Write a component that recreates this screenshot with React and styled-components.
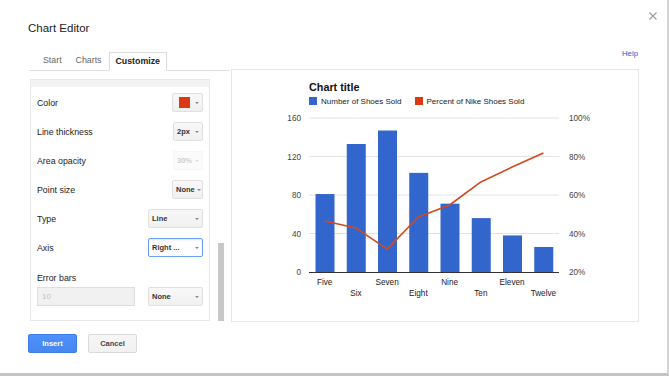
import React from "react";
import styled, { createGlobalStyle } from "styled-components";

const GlobalStyle = createGlobalStyle`
  html, body { margin: 0; padding: 0; background: #fff; }
  body { font-family: "Liberation Sans", Arial, sans-serif; color: #222; }
`;

const Dialog = styled.div`
  position: relative;
  width: 669px;
  height: 376px;
  box-sizing: border-box;
  border-right: 2px solid #d4d4d4;
  border-bottom: 3px solid #c4c4c4;
  background: #fff;
  overflow: hidden;
`;

const CloseButton = styled.div`
  position: absolute;
  top: 12px;
  right: 10px;
  width: 8px;
  height: 8px;
  display: flex;
`;

const Header = styled.h1`
  margin: 0;
  box-sizing: border-box;
  height: 48px;
  padding: 21px 0 0 28px;
  font-size: 11.5px;
  line-height: 14px;
  font-weight: normal;
  color: #222;
`;

const Main = styled.div`
  display: flex;
  gap: 6px;
  padding-left: 29px;
  height: 274px;
`;

const LeftCol = styled.div`
  width: 196px;
  display: flex;
  flex-direction: column;
`;

const TabBar = styled.div`
  display: flex;
  align-items: flex-start;
  margin-top: 4px;
  width: 194px;
  height: 18px;
  padding-left: 7px;
  box-sizing: content-box;
  border-bottom: 1px solid #e0e0e0;
`;

const Tab = styled.div`
  box-sizing: border-box;
  height: ${(p) => (p.$active ? "19px" : "18px")};
  line-height: 17px;
  padding: 0 ${(p) => (p.$active ? "6px" : "7px")};
  font-size: 8.8px;
  font-weight: ${(p) => (p.$active ? "bold" : "normal")};
  color: ${(p) => (p.$active ? "#222" : "#666")};
  background: #fff;
  border: ${(p) => (p.$active ? "1px solid #dcdcdc" : "none")};
  border-bottom: ${(p) => (p.$active ? "1px solid #fff" : "none")};
`;

const PanelArea = styled.div`
  display: flex;
  margin-top: 8px;
  height: 242px;
`;

const Panel = styled.div`
  box-sizing: border-box;
  margin-left: 1px;
  width: 180px;
  height: 242px;
  border: 1px solid #e8e8e8;
`;

const Strip = styled.div`
  height: 7px;
  background: #f3f3f3;
`;

const Rows = styled.div`
  padding: 1px 6px 0 6px;
`;

const Row = styled.div`
  display: flex;
  align-items: center;
  justify-content: space-between;
  height: 29px;
`;

const Label = styled.span`
  font-size: 8.8px;
  color: #222;
`;

const BlockLabel = styled.div`
  padding-top: 10px;
  font-size: 8.8px;
  line-height: 12px;
  color: #222;
`;

const InputRow = styled.div`
  display: flex;
  justify-content: space-between;
  margin-top: 3px;
`;

const TextInput = styled.div`
  box-sizing: border-box;
  width: 98px;
  height: 19px;
  padding-left: 4px;
  line-height: 17px;
  font-size: 8px;
  color: #c0c0c0;
  background: #f1f1f1;
  border: 1px solid #dedede;
`;

const Select = styled.div`
  box-sizing: border-box;
  width: ${(p) => p.$w}px;
  height: 19px;
  display: flex;
  align-items: center;
  justify-content: space-between;
  gap: 2px;
  padding: 0 3px 0 ${(p) => (p.$swatch ? 6 : 3)}px;
  border-radius: 2px;
  font-size: 7.5px;
  font-weight: bold;
  white-space: nowrap;
  color: ${(p) => (p.$disabled ? "#cfcfcf" : "#333")};
  border: 1px solid
    ${(p) => (p.$focus ? "#6b9ff2" : p.$disabled ? "#f6f6f6" : "#e0e0e0")};
  background: ${(p) =>
    p.$focus
      ? "#fff"
      : p.$disabled
      ? "#fbfbfb"
      : "linear-gradient(#f8f8f8, #f0f0f0)"};
  box-shadow: ${(p) => (p.$focus ? "inset 0 1px 2px rgba(0,0,0,0.1)" : "none")};
`;

const Arrow = styled.span`
  flex: none;
  width: 0;
  height: 0;
  border-left: 2px solid transparent;
  border-right: 2px solid transparent;
  border-top: 2px solid ${(p) => (p.$disabled ? "#ddd" : "#888")};
`;

const Swatch = styled.span`
  width: 11px;
  height: 11px;
  background: #dc3912;
`;

const ScrollTrack = styled.div`
  margin-left: 8px;
  width: 6px;
  display: flex;
  flex-direction: column;
  justify-content: flex-end;
`;

const Thumb = styled.div`
  height: 78px;
  background: #c8c8c8;
`;

const RightCol = styled.div`
  width: 408px;
  display: flex;
  flex-direction: column;
`;

const HelpRow = styled.div`
  height: 21px;
  text-align: right;
  padding-right: 1px;
  font-size: 7.8px;
  line-height: 12px;
  color: #1a5fd0;
`;

const ChartPanel = styled.div`
  box-sizing: border-box;
  height: 253px;
  border: 1px solid #e6e6e6;
  padding-top: 10px;
`;

const ChartTitle = styled.div`
  padding-left: 77px;
  font-size: 10.8px;
  font-weight: bold;
  line-height: 14px;
  color: #111;
`;

const Legend = styled.div`
  display: flex;
  align-items: center;
  gap: 13px;
  margin: 2px 0 4px;
  padding-left: 77px;
  height: 10px;
`;

const LegendItem = styled.div`
  display: flex;
  align-items: center;
  gap: 4px;
  font-size: 8px;
  color: #222;
`;

const LegendSwatch = styled.span`
  width: 8px;
  height: 8px;
  background: ${(p) => p.$color};
`;

const Footer = styled.div`
  display: flex;
  gap: 11px;
  padding: 12px 0 0 28px;
`;

const Button = styled.div`
  box-sizing: border-box;
  width: 49px;
  height: 19px;
  display: flex;
  align-items: center;
  justify-content: center;
  border-radius: 2px;
  font-size: 7.5px;
  font-weight: bold;
  color: ${(p) => (p.$primary ? "#fff" : "#444")};
  background: ${(p) =>
    p.$primary ? "linear-gradient(#4d90fe, #4787ed)" : "linear-gradient(#f6f6f6, #f1f1f1)"};
  border: 1px solid ${(p) => (p.$primary ? "#3b7de9" : "#dadada")};
`;

const BLUE = "#3366cc";
const RED = "#d24a1f";

const categories = ["Five", "Six", "Seven", "Eight", "Nine", "Ten", "Eleven", "Twelve"];
const shoes = [81, 133, 147, 103, 71, 56, 38, 26];
const percent = [46.5, 42.9, 31.9, 48.6, 54.8, 66.8, 74.5, 81.8];

const X0 = 309;
const X1 = 559;
const BASE = 272;
const TOP = 118;
const step = (X1 - X0) / categories.length;
const yLeft = (v) => BASE - (v / 160) * (BASE - TOP);
const yRight = (p) => BASE - ((p - 20) / 80) * (BASE - TOP);

function Chart() {
  const ticks = [0, 40, 80, 120, 160];
  const rticks = [20, 40, 60, 80, 100];
  const linePts = percent
    .map((p, i) => `${X0 + step * (i + 0.5)},${yRight(p)}`)
    .join(" ");
  return (
    <svg
      width="406"
      height="211"
      viewBox="232 110 406 211"
      style={{ display: "block" }}
      fontFamily="Liberation Sans, Arial, sans-serif"
    >
      {ticks.map((t) => (
        <g key={t}>
          {t !== 0 && (
            <line x1={X0} x2={X1} y1={yLeft(t)} y2={yLeft(t)} stroke="#e3e3e3" strokeWidth="1" />
          )}
          <text x="301" y={yLeft(t)} dy="3" textAnchor="end" fontSize="8.2" fill="#444">
            {t}
          </text>
        </g>
      ))}
      {rticks.map((t) => (
        <text key={t} x="569" y={yRight(t)} dy="3" fontSize="8.2" fill="#444">
          {t}%
        </text>
      ))}
      {shoes.map((v, i) => (
        <rect
          key={i}
          x={X0 + step * i + 6.5}
          y={yLeft(v)}
          width="19"
          height={BASE - yLeft(v)}
          fill={BLUE}
        />
      ))}
      <line x1={X0} x2={X1} y1={BASE + 0.5} y2={BASE + 0.5} stroke="#333" strokeWidth="1" />
      <polyline points={linePts} fill="none" stroke={RED} strokeWidth="1.6" strokeLinejoin="round" />
      {categories.map((c, i) => (
        <text
          key={c}
          x={X0 + step * (i + 0.5)}
          y={i % 2 === 0 ? 282 : 293}
          dy="3"
          textAnchor="middle"
          fontSize="8.2"
          fill="#222"
        >
          {c}
        </text>
      ))}
    </svg>
  );
}

export default function App() {
  return (
    <>
      <GlobalStyle />
      <Dialog>
        <CloseButton>
          <svg width="8" height="8" viewBox="0 0 8 8">
            <path d="M0.5 0.5 L7.5 7.5 M7.5 0.5 L0.5 7.5" stroke="#9a9a9a" strokeWidth="1.1" />
          </svg>
        </CloseButton>
        <Header>Chart Editor</Header>
        <Main>
          <LeftCol>
            <TabBar>
              <Tab>Start</Tab>
              <Tab>Charts</Tab>
              <Tab $active>Customize</Tab>
            </TabBar>
            <PanelArea>
              <Panel>
                <Strip />
                <Rows>
                  <Row>
                    <Label>Color</Label>
                    <Select $w={31} $swatch>
                      <Swatch />
                      <Arrow />
                    </Select>
                  </Row>
                  <Row>
                    <Label>Line thickness</Label>
                    <Select $w={30}>
                      2px
                      <Arrow />
                    </Select>
                  </Row>
                  <Row>
                    <Label>Area opacity</Label>
                    <Select $w={30} $disabled>
                      30%
                      <Arrow $disabled />
                    </Select>
                  </Row>
                  <Row>
                    <Label>Point size</Label>
                    <Select $w={31}>
                      None
                      <Arrow />
                    </Select>
                  </Row>
                  <Row>
                    <Label>Type</Label>
                    <Select $w={55}>
                      Line
                      <Arrow />
                    </Select>
                  </Row>
                  <Row>
                    <Label>Axis</Label>
                    <Select $w={55} $focus>
                      Right ...
                      <Arrow />
                    </Select>
                  </Row>
                  <BlockLabel>Error bars</BlockLabel>
                  <InputRow>
                    <TextInput>10</TextInput>
                    <Select $w={55}>
                      None
                      <Arrow />
                    </Select>
                  </InputRow>
                </Rows>
              </Panel>
              <ScrollTrack>
                <Thumb />
              </ScrollTrack>
            </PanelArea>
          </LeftCol>
          <RightCol>
            <HelpRow>Help</HelpRow>
            <ChartPanel>
              <ChartTitle>Chart title</ChartTitle>
              <Legend>
                <LegendItem>
                  <LegendSwatch $color={BLUE} />
                  Number of Shoes Sold
                </LegendItem>
                <LegendItem>
                  <LegendSwatch $color="#dc3912" />
                  Percent of Nike Shoes Sold
                </LegendItem>
              </Legend>
              <Chart />
            </ChartPanel>
          </RightCol>
        </Main>
        <Footer>
          <Button $primary>Insert</Button>
          <Button>Cancel</Button>
        </Footer>
      </Dialog>
    </>
  );
}
